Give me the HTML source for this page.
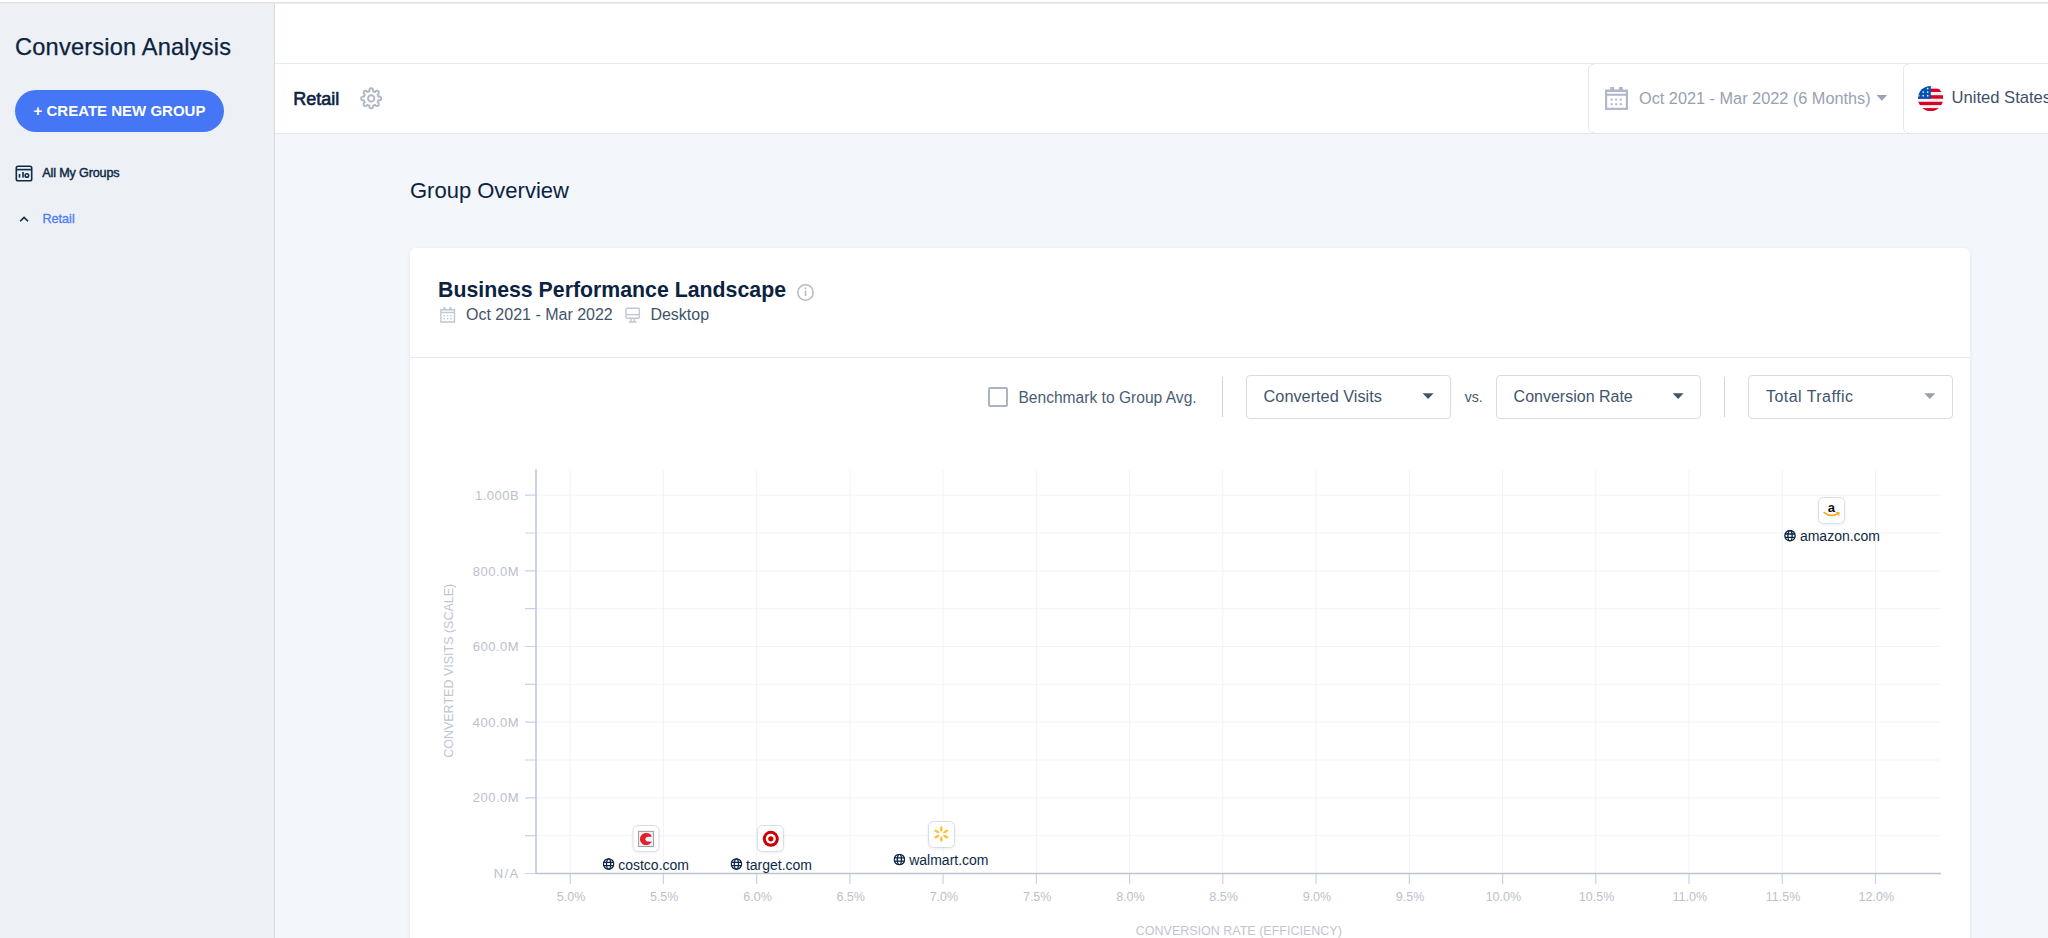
<!DOCTYPE html>
<html>
<head>
<meta charset="utf-8">
<style>
html,body{margin:0;padding:0;}
body{width:2048px;height:938px;overflow:hidden;position:relative;background:#F3F6FA;font-family:"Liberation Sans",sans-serif;}
.a{position:absolute;white-space:nowrap;}
.t{position:absolute;white-space:nowrap;line-height:1;}
</style>
</head>
<body>
<!-- top strip -->
<div class="a" style="left:0;top:0;width:2048px;height:2px;background:#fff"></div>
<div class="a" style="left:0;top:2px;width:2048px;height:1px;background:#E1E2E3"></div>
<div class="a" style="left:0;top:3px;width:2048px;height:1px;background:#EAECEF;z-index:2"></div>

<!-- sidebar -->
<div class="a" style="left:0;top:3px;width:274px;height:935px;background:#EDF0F5"></div>
<div class="a" style="left:274px;top:3px;width:1px;height:935px;background:#D6DBE2"></div>
<div class="t" style="left:15px;top:35.6px;font-size:23.6px;color:#0B2341;letter-spacing:0.2px;-webkit-text-stroke:0.25px #0B2341">Conversion Analysis</div>
<div class="a" style="left:15px;top:90px;width:209px;height:42px;border-radius:21px;background:#4476F5"></div>
<div class="t" style="left:33.6px;top:103.3px;font-size:15px;font-weight:bold;color:#fff">+ CREATE NEW GROUP</div>
<div class="t" style="left:42.3px;top:166.8px;font-size:12.6px;color:#0E2A47;letter-spacing:-0.15px;-webkit-text-stroke:0.45px #0E2A47">All My Groups</div>
<div class="t" style="left:42.5px;top:212.5px;font-size:12.6px;color:#4A7DF6;-webkit-text-stroke:0.3px #4A7DF6">Retail</div>

<!-- header -->
<div class="a" style="left:275px;top:3px;width:1773px;height:60px;background:#fff"></div>
<div class="a" style="left:275px;top:63px;width:1773px;height:1px;background:#E6E9EE"></div>
<div class="a" style="left:275px;top:64px;width:1773px;height:69px;background:#fff"></div>
<div class="a" style="left:275px;top:133px;width:1773px;height:1px;background:#E3E7EC"></div>
<div class="t" style="left:293.3px;top:89.7px;font-size:18px;color:#0B2341;-webkit-text-stroke:0.6px #0B2341">Retail</div>
<div class="a" style="left:1588px;top:64px;width:6px;height:69px;border-left:1px solid #E6E9EE;border-top:1px solid #E6E9EE;border-bottom:1px solid #E6E9EE;border-radius:5px 0 0 5px;box-sizing:border-box"></div>
<div class="t" style="left:1639px;top:90.3px;font-size:16.3px;color:#98A1B3">Oct 2021 - Mar 2022 (6 Months)</div>
<div class="a" style="left:1903px;top:64px;width:6px;height:69px;border-left:1px solid #E6E9EE;border-top:1px solid #E6E9EE;border-bottom:1px solid #E6E9EE;border-radius:5px 0 0 5px;box-sizing:border-box"></div>
<div class="t" style="left:1951.5px;top:89.6px;font-size:16.6px;color:#3E5068">United States</div>

<!-- content -->
<div class="t" style="left:410px;top:179.7px;font-size:22px;color:#0B2341">Group Overview</div>
<div class="a" style="left:410px;top:248px;width:1560px;height:720px;border-radius:6px;background:#fff;box-shadow:0 1px 4px rgba(30,50,90,0.07)"></div>
<div class="a" style="left:410px;top:357px;width:1560px;height:1px;background:#E8EBEF"></div>
<div class="t" style="left:438px;top:279.5px;font-size:21.3px;font-weight:bold;color:#0B2341">Business Performance Landscape</div>
<div class="t" style="left:466px;top:306.6px;font-size:16px;color:#3F5369">Oct 2021 - Mar 2022</div>
<div class="t" style="left:650.4px;top:306.5px;font-size:16px;color:#3F5369">Desktop</div>

<!-- controls -->
<div class="a" style="left:988px;top:387px;width:20px;height:20px;border:2px solid #AAB5C4;border-radius:2px;box-sizing:border-box"></div>
<div class="t" style="left:1018.4px;top:389.6px;font-size:15.6px;color:#4A5D73">Benchmark to Group Avg.</div>
<div class="a" style="left:1222px;top:377px;width:1px;height:40px;background:#CDD3DB"></div>
<div class="a" style="left:1246px;top:375px;width:205px;height:44px;border:1px solid #D8DDE4;border-radius:4px;box-sizing:border-box"></div>
<div class="t" style="left:1263.6px;top:388.3px;font-size:16.3px;color:#3F556D">Converted Visits</div>
<div class="t" style="left:1464.8px;top:389.9px;font-size:14px;color:#44586F">vs.</div>
<div class="a" style="left:1496px;top:375px;width:205px;height:44px;border:1px solid #D8DDE4;border-radius:4px;box-sizing:border-box"></div>
<div class="t" style="left:1513.6px;top:388.5px;font-size:16px;color:#3F556D">Conversion Rate</div>
<div class="a" style="left:1724px;top:377px;width:1px;height:40px;background:#CDD3DB"></div>
<div class="a" style="left:1748px;top:375px;width:205px;height:44px;border:1px solid #D8DDE4;border-radius:4px;box-sizing:border-box"></div>
<div class="t" style="left:1766px;top:388.5px;font-size:16px;letter-spacing:0.45px;color:#3F556D">Total Traffic</div>

<svg class="a" style="left:0;top:0" width="2048" height="938" viewBox="0 0 2048 938">
<style>.ax{font-family:"Liberation Sans";font-size:12.5px;fill:#B9C1CC}.ay{font-family:"Liberation Sans";font-size:13px;letter-spacing:0.5px;fill:#B9C1CC}.axt{font-family:"Liberation Sans";font-size:12.5px;fill:#BFC6D0}.dl{font-family:"Liberation Sans";font-size:14px;fill:#0E2A47}</style>
<path d="M537 495.2H1941 M537 533.0H1941 M537 570.9H1941 M537 608.7H1941 M537 646.5H1941 M537 684.4H1941 M537 722.2H1941 M537 760.0H1941 M537 797.8H1941 M537 835.7H1941 M570.2 470V873 M663.4 470V873 M756.7 470V873 M849.9 470V873 M943.1 470V873 M1036.4 470V873 M1129.6 470V873 M1222.8 470V873 M1316.1 470V873 M1409.3 470V873 M1502.6 470V873 M1595.8 470V873 M1689.0 470V873 M1782.3 470V873 M1875.5 470V873" stroke="#F2F3F5" stroke-width="1" fill="none"/>
<path d="M525 495.2H536 M525 533.0H536 M525 570.9H536 M525 608.7H536 M525 646.5H536 M525 684.4H536 M525 722.2H536 M525 760.0H536 M525 797.8H536 M525 835.7H536 M525 873.5H536 M570.2 874V884 M663.4 874V884 M756.7 874V884 M849.9 874V884 M943.1 874V884 M1036.4 874V884 M1129.6 874V884 M1222.8 874V884 M1316.1 874V884 M1409.3 874V884 M1502.6 874V884 M1595.8 874V884 M1689.0 874V884 M1782.3 874V884 M1875.5 874V884" stroke="#C7D3EC" stroke-width="1.2" fill="none"/>
<path d="M536 469.5V873.5H1941" stroke="#BDC5D1" stroke-width="1.5" fill="none"/>
<text x="519.2" y="499.8" text-anchor="end" class="ay">1.000B</text>
<text x="519.2" y="575.5" text-anchor="end" class="ay">800.0M</text>
<text x="519.2" y="651.1" text-anchor="end" class="ay">600.0M</text>
<text x="519.2" y="726.8" text-anchor="end" class="ay">400.0M</text>
<text x="519.2" y="802.4" text-anchor="end" class="ay">200.0M</text>
<text x="519.6" y="878.1" text-anchor="end" class="ay" style="letter-spacing:1.4px">N/A</text>
<text x="571.0" y="901.2" text-anchor="middle" class="ax">5.0%</text>
<text x="664.2" y="901.2" text-anchor="middle" class="ax">5.5%</text>
<text x="757.5" y="901.2" text-anchor="middle" class="ax">6.0%</text>
<text x="850.7" y="901.2" text-anchor="middle" class="ax">6.5%</text>
<text x="943.9" y="901.2" text-anchor="middle" class="ax">7.0%</text>
<text x="1037.2" y="901.2" text-anchor="middle" class="ax">7.5%</text>
<text x="1130.4" y="901.2" text-anchor="middle" class="ax">8.0%</text>
<text x="1223.6" y="901.2" text-anchor="middle" class="ax">8.5%</text>
<text x="1316.9" y="901.2" text-anchor="middle" class="ax">9.0%</text>
<text x="1410.1" y="901.2" text-anchor="middle" class="ax">9.5%</text>
<text x="1503.4" y="901.2" text-anchor="middle" class="ax">10.0%</text>
<text x="1596.6" y="901.2" text-anchor="middle" class="ax">10.5%</text>
<text x="1689.8" y="901.2" text-anchor="middle" class="ax">11.0%</text>
<text x="1783.1" y="901.2" text-anchor="middle" class="ax">11.5%</text>
<text x="1876.3" y="901.2" text-anchor="middle" class="ax">12.0%</text>
<text x="1238.8" y="935.2" text-anchor="middle" class="axt">CONVERSION RATE (EFFICIENCY)</text>
<text transform="translate(453.2 670.8) rotate(-90)" x="0" y="0" text-anchor="middle" class="axt">CONVERTED VISITS (SCALE)</text>

<!-- All My Groups icon -->
<g fill="none" stroke="#0E2A47" stroke-width="1.6">
<rect x="16.3" y="166.3" width="15.4" height="14.4" rx="1.8"/>
<path d="M16.5 169.6H31.5"/>
</g>
<g fill="#0E2A47">
<rect x="18.7" y="174" width="1.6" height="3.6"/>
<rect x="22.2" y="172" width="1.6" height="5.6"/>
</g>
<circle cx="26.9" cy="175.5" r="1.8" fill="none" stroke="#0E2A47" stroke-width="1.5"/>
<!-- chevron -->
<path d="M20.2 221.3L24.1 217.4L28 221.3" fill="none" stroke="#0E2A47" stroke-width="1.6"/>
<!-- gear -->
<g fill="none" stroke="#AFB8C3" stroke-width="1.9" stroke-linejoin="round">
<circle cx="371.2" cy="98.4" r="3.2"/>
<path d="M369.50 91.20 A1.95 1.95 0 1 1 372.90 91.20 A7.4 7.4 0 0 1 375.09 92.10 A1.95 1.95 0 1 1 377.50 94.51 A7.4 7.4 0 0 1 378.40 96.70 A1.95 1.95 0 1 1 378.40 100.10 A7.4 7.4 0 0 1 377.50 102.29 A1.95 1.95 0 1 1 375.09 104.70 A7.4 7.4 0 0 1 372.90 105.60 A1.95 1.95 0 1 1 369.50 105.60 A7.4 7.4 0 0 1 367.31 104.70 A1.95 1.95 0 1 1 364.90 102.29 A7.4 7.4 0 0 1 364.00 100.10 A1.95 1.95 0 1 1 364.00 96.70 A7.4 7.4 0 0 1 364.90 94.51 A1.95 1.95 0 1 1 367.31 92.10 A7.4 7.4 0 0 1 369.50 91.20Z"/>
</g>
<!-- header calendar -->
<g fill="#AEB8C7">
<path d="M1605 89.4H1628V110H1605Z M1607.2 95.8V107.8H1625.8V95.8Z M1607.2 92V93.8H1625.8V92Z" fill-rule="evenodd"/>
<rect x="1610.3" y="87" width="3.7" height="3"/>
<rect x="1619" y="87" width="3.7" height="3"/>
<rect x="1610.7" y="98.6" width="2" height="2"/><rect x="1615.2" y="98.6" width="2" height="2"/><rect x="1619.9" y="98.6" width="2" height="2"/>
<rect x="1610.7" y="103.2" width="2" height="2"/><rect x="1615.2" y="103.2" width="2" height="2"/><rect x="1619.9" y="103.2" width="2" height="2"/>
</g>
<!-- date dropdown arrow -->
<path d="M1876.5 95H1887.2L1881.85 100.7Z" fill="#9AA3B5"/>
<!-- flag -->
<defs><clipPath id="fc"><circle cx="1930.6" cy="98.5" r="12.6"/></clipPath></defs>
<g clip-path="url(#fc)">
<rect x="1917" y="85" width="28" height="28" fill="#F0F0F0"/>
<rect x="1917" y="88.7" width="28" height="3.3" fill="#D80027"/>
<rect x="1917" y="95.2" width="28" height="3.5" fill="#D80027"/>
<rect x="1917" y="101.8" width="28" height="3.3" fill="#D80027"/>
<rect x="1917" y="108.1" width="28" height="3.5" fill="#D80027"/>
<rect x="1917" y="85" width="13.8" height="13.7" fill="#0052B4"/>
<g fill="#F0F0F0"><circle cx="1927.7" cy="88.6" r="0.85"/><circle cx="1923.2" cy="92.1" r="0.85"/><circle cx="1927.7" cy="92.1" r="0.85"/><circle cx="1923.2" cy="95.7" r="0.85"/><circle cx="1927.7" cy="95.7" r="0.85"/><circle cx="1918.7" cy="95.7" r="0.85"/></g>
</g>
<!-- info icon -->
<circle cx="805.5" cy="292.5" r="7.7" fill="none" stroke="#B9B9B9" stroke-width="1.5"/>
<rect x="804.8" y="290.5" width="1.5" height="5.5" fill="#B9B9B9"/>
<circle cx="805.5" cy="288.3" r="0.95" fill="#B9B9B9"/>
<!-- small calendar -->
<g fill="#C0C7D2">
<path d="M440.2 308.9H455.2V322.7H440.2Z M441.6 313.2V321.3H453.8V313.2Z M441.6 310.6V311.8H453.8V310.6Z" fill-rule="evenodd"/>
<rect x="443.2" y="307.3" width="2.4" height="2"/>
<rect x="449.2" y="307.3" width="2.4" height="2"/>
<rect x="443.6" y="315" width="1.4" height="1.4"/><rect x="446.9" y="315" width="1.4" height="1.4"/><rect x="450.2" y="315" width="1.4" height="1.4"/>
<rect x="443.6" y="318" width="1.4" height="1.4"/><rect x="446.9" y="318" width="1.4" height="1.4"/><rect x="450.2" y="318" width="1.4" height="1.4"/>
</g>
<!-- monitor -->
<g fill="none" stroke="#C0C7D2" stroke-width="1.4">
<rect x="626" y="308.3" width="13.4" height="10" rx="1"/>
<path d="M626 314.6H639.4"/>
<path d="M631 318.5V321.8M634.4 318.5V321.8M628.8 322H636.6"/>
</g>
<!-- dropdown arrows -->
<path d="M1422.6 393.3H1433.6L1428.1 399.1Z" fill="#3E556E"/>
<path d="M1672.6 393.3H1683.6L1678.1 399.1Z" fill="#3E556E"/>
<path d="M1924.3 393.3H1935.3L1929.8 399.1Z" fill="#969FAD"/>

<defs>
<filter id="sh" x="-30%" y="-30%" width="160%" height="160%"><feDropShadow dx="0" dy="1" stdDeviation="1" flood-color="#1E3A66" flood-opacity="0.08"/></filter>
<symbol id="globe" viewBox="0 0 12 12"><g fill="none" stroke="#0B2545" stroke-width="1.3"><circle cx="6" cy="6" r="5.2"/><path d="M1 4.3H11M1 7.7H11"/><ellipse cx="6" cy="6" rx="2.1" ry="5.2"/></g></symbol>
</defs>
<!-- boxes -->
<g fill="#fff" stroke="#D7DEEA" stroke-width="1" filter="url(#sh)">
<rect x="633" y="825.5" width="26" height="26" rx="5"/>
<rect x="757.5" y="825.5" width="26" height="26" rx="5"/>
<rect x="928.5" y="821.5" width="26" height="26" rx="5"/>
<rect x="1818.5" y="497.5" width="26" height="26" rx="5"/>
</g>
<!-- costco -->
<rect x="638.5" y="831.4" width="15" height="15.1" fill="#EEF1F2" stroke="#A3A3A3" stroke-width="1.1"/>
<ellipse cx="646.2" cy="839" rx="6.3" ry="6.1" fill="#E31E2D" transform="rotate(-12 646.2 839)"/>
<ellipse cx="648.7" cy="839.2" rx="3.3" ry="2.4" fill="#EEF3F5"/>
<path d="M649.2 836.9L653 836.3L653 841.7L649.2 841.5Z" fill="#EEF3F5"/>
<!-- target -->
<circle cx="770.8" cy="838.8" r="8" fill="#CC0000"/>
<circle cx="770.8" cy="838.8" r="5" fill="#fff"/>
<circle cx="770.8" cy="838.8" r="2.6" fill="#CC0000"/>
<!-- walmart -->
<g fill="#FFBE2A" transform="translate(941.3 834.05)"><ellipse cx="0" cy="-5.1" rx="1.2" ry="2.85" transform="rotate(0)"/><ellipse cx="0" cy="-5.1" rx="1.2" ry="2.85" transform="rotate(60)"/><ellipse cx="0" cy="-5.1" rx="1.2" ry="2.85" transform="rotate(120)"/><ellipse cx="0" cy="-5.1" rx="1.2" ry="2.85" transform="rotate(180)"/><ellipse cx="0" cy="-5.1" rx="1.2" ry="2.85" transform="rotate(240)"/><ellipse cx="0" cy="-5.1" rx="1.2" ry="2.85" transform="rotate(300)"/></g>
<!-- amazon -->
<text x="1831.3" y="511.8" text-anchor="middle" font-family="Liberation Sans" font-weight="bold" font-size="13" fill="#111">a</text>
<path d="M1824.2 512.6C1828.5 515.9 1834 516.2 1838.2 513.4" fill="none" stroke="#F8A51C" stroke-width="1.6" stroke-linecap="round"/>
<path d="M1836.3 512.3L1839.2 512.9L1838.6 515.5" fill="none" stroke="#F8A51C" stroke-width="1.1" stroke-linecap="round"/>
<!-- globes + labels -->
<use href="#globe" x="602.6" y="858" width="12" height="12"/>
<text x="618.2" y="869.5" class="dl">costco.com</text>
<use href="#globe" x="730.4" y="858" width="12" height="12"/>
<text x="745.9" y="869.5" class="dl">target.com</text>
<use href="#globe" x="893.4" y="853.5" width="12" height="12"/>
<text x="909.2" y="864.9" class="dl">walmart.com</text>
<use href="#globe" x="1784" y="529.7" width="12" height="12"/>
<text x="1799.9" y="541.2" class="dl">amazon.com</text>

</svg>
</body>
</html>
